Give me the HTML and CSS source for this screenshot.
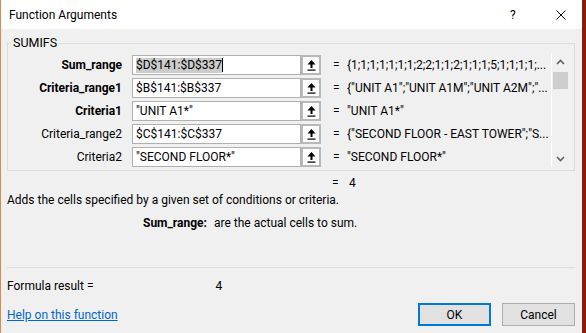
FILE: index.html
```html
<!DOCTYPE html>
<html lang="en">
<head>
    <meta charset="UTF-8">
    <meta name="viewport" content="width=device-width, initial-scale=1.0">
    <title>Function Arguments</title>
    <link rel="stylesheet" href="styles.css">
</head>
<body>
    <div class="dialog">
        <div class="titlebar">
            <span class="title">Function Arguments</span>
            <span class="tb-help">?</span>
            <span class="tb-close">
                <svg width="10" height="10" viewBox="0 0 10 10"><path d="M0.5 0.5 L9.5 9.5 M9.5 0.5 L0.5 9.5" stroke="#000" stroke-width="1"/></svg>
            </span>
        </div>

        <fieldset class="group">
            <legend>SUMIFS</legend>
            <div class="args">
                <div class="rows">
                    <label class="arg-name bold">Sum_range</label>
                    <div class="field"><span class="sel">$D$141:$D$337</span><span class="caret"></span></div>
                    <div class="pick"><svg width="9" height="11" viewBox="0 0 9 11"><path d="M4.5 0 L0.5 4.5 H3.5 V8 H5.5 V4.5 H8.5 Z" fill="#000"/><rect x="0.5" y="9.5" width="8" height="1.2" fill="#000"/></svg></div>
                    <div class="value"><span class="eq">=</span>{1;1;1;1;1;1;1;2;2;1;1;2;1;1;1;5;1;1;1;1;...</div>

                    <label class="arg-name bold">Criteria_range1</label>
                    <div class="field">$B$141:$B$337</div>
                    <div class="pick"><svg width="9" height="11" viewBox="0 0 9 11"><path d="M4.5 0 L0.5 4.5 H3.5 V8 H5.5 V4.5 H8.5 Z" fill="#000"/><rect x="0.5" y="9.5" width="8" height="1.2" fill="#000"/></svg></div>
                    <div class="value"><span class="eq">=</span>{"UNIT A1";"UNIT A1M";"UNIT A2M";"...</div>

                    <label class="arg-name bold">Criteria1</label>
                    <div class="field">"UNIT A1*"</div>
                    <div class="pick"><svg width="9" height="11" viewBox="0 0 9 11"><path d="M4.5 0 L0.5 4.5 H3.5 V8 H5.5 V4.5 H8.5 Z" fill="#000"/><rect x="0.5" y="9.5" width="8" height="1.2" fill="#000"/></svg></div>
                    <div class="value"><span class="eq">=</span>"UNIT A1*"</div>

                    <label class="arg-name">Criteria_range2</label>
                    <div class="field">$C$141:$C$337</div>
                    <div class="pick"><svg width="9" height="11" viewBox="0 0 9 11"><path d="M4.5 0 L0.5 4.5 H3.5 V8 H5.5 V4.5 H8.5 Z" fill="#000"/><rect x="0.5" y="9.5" width="8" height="1.2" fill="#000"/></svg></div>
                    <div class="value"><span class="eq">=</span>{"SECOND FLOOR - EAST TOWER";"S...</div>

                    <label class="arg-name">Criteria2</label>
                    <div class="field">"SECOND FLOOR*"</div>
                    <div class="pick"><svg width="9" height="11" viewBox="0 0 9 11"><path d="M4.5 0 L0.5 4.5 H3.5 V8 H5.5 V4.5 H8.5 Z" fill="#000"/><rect x="0.5" y="9.5" width="8" height="1.2" fill="#000"/></svg></div>
                    <div class="value"><span class="eq">=</span>"SECOND FLOOR*"</div>
                </div>
                <div class="scroll">
                    <div class="scroll-btn"><svg width="9" height="6" viewBox="0 0 9 6"><path d="M1 5 L4.5 1.5 L8 5" fill="none" stroke="#606060" stroke-width="1.6"/></svg></div>
                    <div class="thumb"></div>
                    <div class="scroll-btn down"><svg width="9" height="6" viewBox="0 0 9 6"><path d="M1 1 L4.5 4.5 L8 1" fill="none" stroke="#606060" stroke-width="1.6"/></svg></div>
                </div>
            </div>
        </fieldset>

        <div class="total"><span class="eq">=</span>4</div>
        <p class="desc">Adds the cells specified by a given set of conditions or criteria.</p>
        <p class="arg-help"><span class="arg-help-name">Sum_range:</span>are the actual cells to sum.</p>

        <div class="divider"></div>

        <p class="formula">Formula result =<span class="formula-val">4</span></p>

        <div class="footer">
            <a href="#" class="help-link">Help on this function</a>
            <button class="btn btn-ok">OK</button>
            <button class="btn">Cancel</button>
        </div>
    </div>
</body>
</html>
```

FILE: styles.css
```css
*{
    margin: 0;
    padding: 0;
    box-sizing: border-box;
}
body{
    background-color: #8a1c0e;
    font-family: Roboto, "Noto Sans", sans-serif;
    font-size: 12px;
    color: #000;
    overflow: hidden;
}

.dialog{
    width: 582px;
    height: 333px;
    background-color: #f0f0f0;
    border-left: 1px solid #e3894f;
    overflow: hidden;
}

.titlebar{
    height: 29px;
    background-color: #fff;
    display: flex;
    align-items: center;
}
.title{
    padding-left: 8px;
    font-size: 12px;
    flex: 1;
}
.tb-help{
    width: 10px;
    font-size: 12px;
    margin-right: 36px;
}
.tb-close{
    width: 10px;
    height: 10px;
    margin-right: 16px;
    display: flex;
}

.group{
    margin: 6px 7px 0 6px;
    border: 1px solid #dcdcdc;
    padding: 2px 6px 3px 0;
    min-width: 0;
}
.group legend{
    margin-left: 3px;
    padding: 0 2px;
    font-size: 12.5px;
    line-height: 16px;
}

.args{
    display: flex;
}
.rows{
    flex: 1;
    display: grid;
    grid-template-columns: 124px 169px 20px 1fr;
    row-gap: 3px;
    padding-top: 2px;
    min-width: 0;
}
.arg-name{
    text-align: right;
    padding-right: 10px;
    line-height: 20px;
    white-space: nowrap;
}
.bold{
    font-weight: bold;
}
.field{
    height: 20px;
    background-color: #fff;
    border: 1px solid #b0b0b0;
    padding-left: 3px;
    line-height: 18px;
    white-space: nowrap;
    overflow: hidden;
    display: flex;
    align-items: center;
}
.sel{
    background-color: #cccccc;
    line-height: 15px;
}
.caret{
    width: 1px;
    height: 14px;
    background-color: #000;
}
.pick{
    height: 20px;
    background-color: #fff;
    border: 2px solid #b8b8b8;
    display: flex;
    align-items: center;
    justify-content: center;
}
.value{
    padding-left: 12px;
    line-height: 20px;
    white-space: nowrap;
    overflow: hidden;
}
.eq{
    display: inline-block;
    width: 14px;
}

.scroll{
    width: 17px;
    border-left: 1px solid #fff;
    display: flex;
    flex-direction: column;
    align-items: center;
}
.scroll-btn{
    height: 17px;
    display: flex;
    align-items: center;
    justify-content: center;
}
.down{
    margin-top: auto;
}
.thumb{
    width: 15px;
    height: 17px;
    margin-top: 2px;
    background-color: #cdcdcd;
}

.total{
    margin-top: 4px;
    padding-left: 331px;
    line-height: 16px;
}
.total .eq{
    width: 17px;
}
.desc{
    margin-top: 1px;
    padding-left: 6px;
    line-height: 16px;
}
.arg-help{
    margin-top: 7px;
    padding-left: 142px;
    line-height: 16px;
}
.arg-help-name{
    display: inline-block;
    width: 71px;
    font-weight: bold;
}

.divider{
    margin: 36px 7px 0 6px;
    border-top: 1px solid #dcdcdc;
}
.formula{
    margin-top: 10px;
    padding-left: 6px;
    line-height: 16px;
}
.formula-val{
    padding-left: 122px;
}

.footer{
    margin: 9px 7px 0 6px;
    display: flex;
    align-items: center;
}
.help-link{
    flex: 1;
    color: #0066cc;
    text-decoration: underline;
}
.btn{
    width: 73px;
    height: 23px;
    background-color: #e1e1e1;
    border: 1px solid #adadad;
    font-family: inherit;
    font-size: 12px;
    color: #000;
}
.btn-ok{
    border: 2px solid #0078d7;
    margin-right: 11px;
}
```
